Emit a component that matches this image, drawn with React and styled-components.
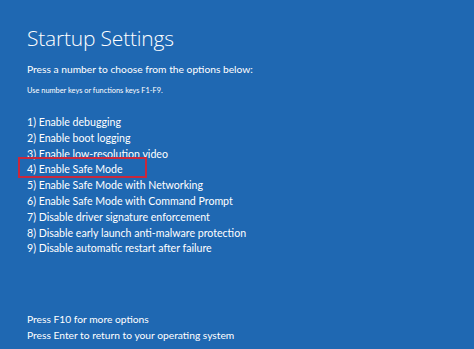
import React from "react";
import styled, { createGlobalStyle } from "styled-components";

const Global = createGlobalStyle`
  html, body { margin: 0; padding: 0; background: #1f68b2; }
  body { font-family: "Lato", "Open Sans", sans-serif; }
`;

const Screen = styled.div`
  width: 474px;
  height: 349px;
  box-sizing: border-box;
  background: #1f68b2;
  color: #ffffff;
  padding: 24px 0 0 27px;
  display: flex;
  flex-direction: column;
  overflow: hidden;
`;

const Title = styled.h1`
  margin: 0;
  font-family: "Open Sans", sans-serif;
  font-weight: 300;
  font-size: 21px;
  line-height: 28px;
  letter-spacing: -0.2px;
`;

const Lead = styled.p`
  margin: 10px 0 0;
  font-size: 10.25px;
  line-height: 15px;
`;

const Hint = styled.p`
  margin: 8px 0 0;
  font-size: 7.4px;
  line-height: 12px;
`;

const List = styled.ol`
  list-style: none;
  margin: 18px 0 0;
  padding: 0;
  display: flex;
  flex-direction: column;
`;

const Item = styled.li`
  position: relative;
  font-size: 10.6px;
  line-height: 15.8px;
  white-space: nowrap;
`;

const Highlight = styled.span`
  position: absolute;
  left: -9px;
  top: -5px;
  width: 129px;
  height: 21px;
  box-sizing: border-box;
  border: 2px solid #c8283c;
  pointer-events: none;
`;

const Footer = styled.div`
  margin-top: auto;
  padding-bottom: 6px;
  display: flex;
  flex-direction: column;
`;

const FooterLine = styled.div`
  font-size: 10.25px;
  line-height: 16px;
`;

const options = [
  "Enable debugging",
  "Enable boot logging",
  "Enable low-resolution video",
  "Enable Safe Mode",
  "Enable Safe Mode with Networking",
  "Enable Safe Mode with Command Prompt",
  "Disable driver signature enforcement",
  "Disable early launch anti-malware protection",
  "Disable automatic restart after failure",
];

export default function App() {
  return (
    <>
      <Global />
      <Screen>
        <Title>Startup Settings</Title>
        <Lead>Press a number to choose from the options below:</Lead>
        <Hint>Use number keys or functions keys F1-F9.</Hint>
        <List>
          {options.map((o, i) => (
            <Item key={o}>
              {i + 1}) {o}
              {i === 3 && <Highlight />}
            </Item>
          ))}
        </List>
        <Footer>
          <FooterLine>Press F10 for more options</FooterLine>
          <FooterLine>Press Enter to return to your operating system</FooterLine>
        </Footer>
      </Screen>
    </>
  );
}
